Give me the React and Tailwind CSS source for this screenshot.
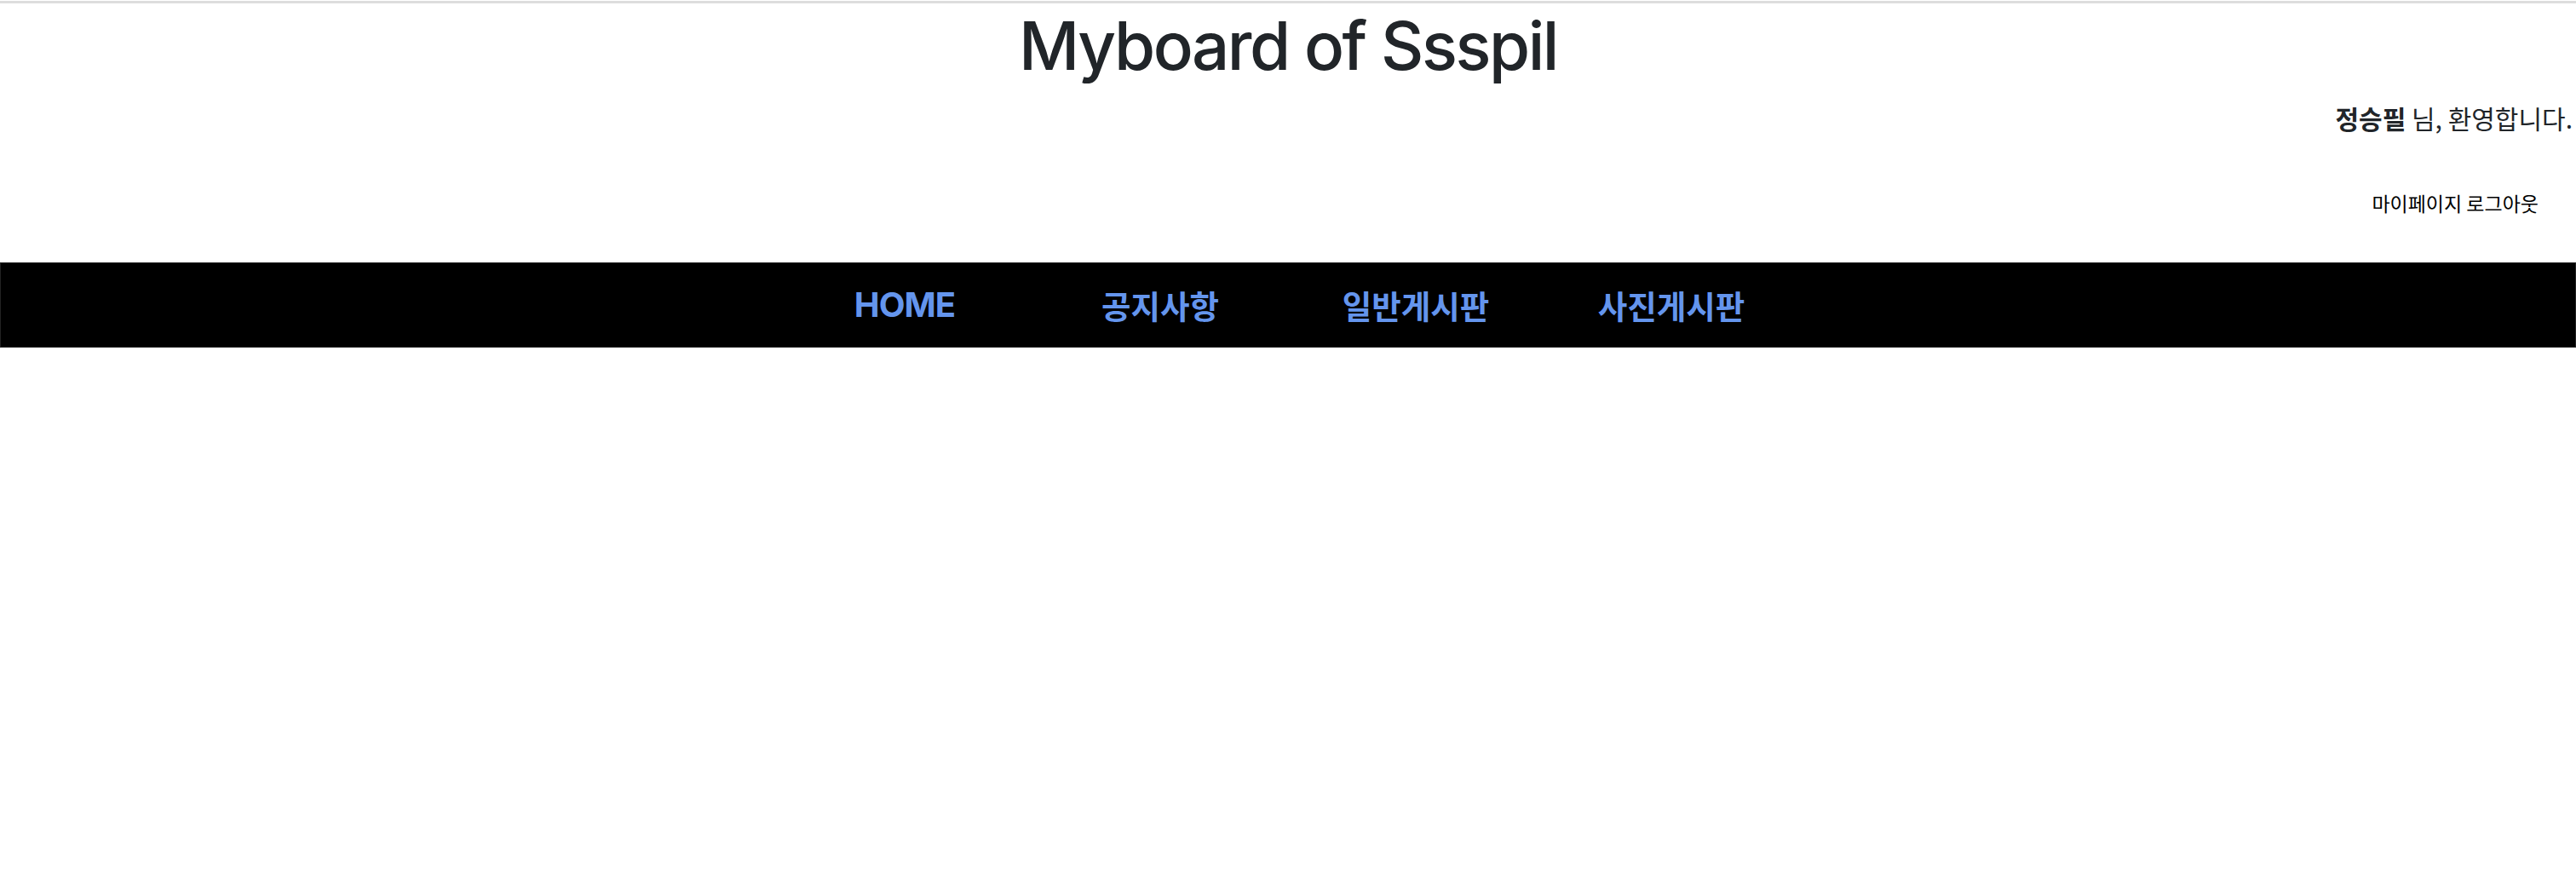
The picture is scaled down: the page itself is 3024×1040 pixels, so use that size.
import React from "react";

export default function App() {
  const navItems = ["HOME", "공지사항", "일반게시판", "사진게시판"];
  return (
    <div className="w-[3024px] min-h-[1040px] bg-white" style={{ fontFamily: "Inter, 'Noto Sans CJK KR', sans-serif" }}>
      <div className="pt-[1px]">
        <div className="h-[3px] bg-[#dddddd]" />
      </div>
      <h1 className="mt-[2px] text-center text-[78px] leading-[96px] font-medium text-[#212529] tracking-[-2.5px]">
        Myboard of Ssspil
      </h1>
      <div
        className="mt-[16px] text-right pr-[4px] text-[30px] leading-[40px] text-[#212529]"
        style={{ fontFamily: "'Noto Sans CJK KR', sans-serif" }}
      >
        <b className="font-bold">정승필</b> 님, 환영합니다.
      </div>
      <div
        className="mt-[64px] text-right pr-[44px] text-[23px] leading-[32px] text-black"
        style={{ fontFamily: "'Noto Sans CJK KR', sans-serif" }}
      >
        <span>마이페이지</span> <span>로그아웃</span>
      </div>
      <nav className="mt-[54px] h-[100px] bg-black border border-[#222222] flex justify-center items-center">
        {navItems.map((item) => (
          <div key={item} className="w-[300px] flex justify-center">
            {item === "HOME" ? (
              <span className="text-[40px] font-bold text-[#6495ed] tracking-[-1px] leading-[48px]" style={{ fontFamily: "Inter, sans-serif" }}>
                {item}
              </span>
            ) : (
              <span className="text-[37.5px] font-bold text-[#6495ed] leading-[48px]" style={{ fontFamily: "'Noto Sans CJK KR', sans-serif" }}>
                {item}
              </span>
            )}
          </div>
        ))}
      </nav>
    </div>
  );
}
